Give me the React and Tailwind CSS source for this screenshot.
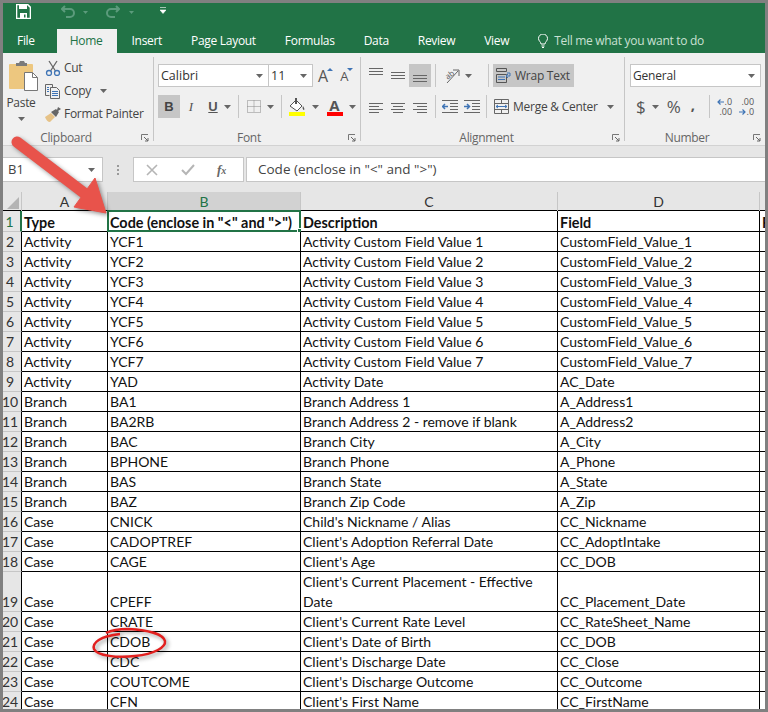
// Excel sheet screenshot: ribbon, formula bar and the field list
import React from "react";

const rows = [
  ["Type", "Code (enclose in \"<\" and \">\")", "Description", "Field"],
  ["Activity", "YCF1", "Activity Custom Field Value 1", "CustomField_Value_1"],
  ["Activity", "YCF2", "Activity Custom Field Value 2", "CustomField_Value_2"],
  ["Activity", "YCF3", "Activity Custom Field Value 3", "CustomField_Value_3"],
  ["Activity", "YCF4", "Activity Custom Field Value 4", "CustomField_Value_4"],
  ["Activity", "YCF5", "Activity Custom Field Value 5", "CustomField_Value_5"],
  ["Activity", "YCF6", "Activity Custom Field Value 6", "CustomField_Value_6"],
  ["Activity", "YCF7", "Activity Custom Field Value 7", "CustomField_Value_7"],
  ["Activity", "YAD", "Activity Date", "AC_Date"],
  ["Branch", "BA1", "Branch Address 1", "A_Address1"],
  ["Branch", "BA2RB", "Branch Address 2 - remove if blank", "A_Address2"],
  ["Branch", "BAC", "Branch City", "A_City"],
  ["Branch", "BPHONE", "Branch Phone", "A_Phone"],
  ["Branch", "BAS", "Branch State", "A_State"],
  ["Branch", "BAZ", "Branch Zip Code", "A_Zip"],
  ["Case", "CNICK", "Child's Nickname / Alias", "CC_Nickname"],
  ["Case", "CADOPTREF", "Client's Adoption Referral Date", "CC_AdoptIntake"],
  ["Case", "CAGE", "Client's Age", "CC_DOB"],
  ["Case", "CPEFF", "Client's Current Placement - Effective Date", "CC_Placement_Date"],
  ["Case", "CRATE", "Client's Current Rate Level", "CC_RateSheet_Name"],
  ["Case", "CDOB", "Client's Date of Birth", "CC_DOB"],
  ["Case", "CDC", "Client's Discharge Date", "CC_Close"],
  ["Case", "COUTCOME", "Client's Discharge Outcome", "CC_Outcome"],
  ["Case", "CFN", "Client's First Name", "CC_FirstName"],
];

const Caret = ({ className = "" }) => (
  <svg width="7" height="4" viewBox="0 0 7 4" className={`shrink-0 ${className}`}>
    <path d="M0 0h7L3.5 4z" fill="#666" />
  </svg>
);

const Lines = ({ ys, className = "" }) => (
  <svg width="14" height="14" viewBox="0 0 14 14" className={`shrink-0 ${className}`}>
    {ys.map(([x1, x2, y]) => (
      <path key={y} d={`M${x1} ${y + 0.5}H${x2}`} stroke="#666" />
    ))}
  </svg>
);

const Launcher = () => (
  <svg width="8" height="8" viewBox="0 0 8 8" className="shrink-0">
    <path d="M.5 6V.5H7" fill="none" stroke="#777" />
    <path d="M3 3l4 4M4 7h3V4" fill="none" stroke="#666" />
  </svg>
);

const Sep = ({ className = "" }) => <div className={`w-px h-[23px] bg-[#c6c6c6] shrink-0 ${className}`} />;

function Group({ width, label, labelShift = "", children }) {
  return (
    <div className={`flex flex-col shrink-0 ${width}`}>
      <div className="h-[76px] pt-[11px]">{children}</div>
      <div className="flex items-center h-[16px] pt-[2px] pr-[4px] text-[#666] text-[12px] tracking-[-0.3px]">
        <span className={`flex-1 text-center ${labelShift}`}>{label}</span>
        <Launcher />
      </div>
    </div>
  );
}

function TitleBar() {
  return (
    <div className="h-[26px] bg-[#217346] flex items-start pl-[13px]">
      <svg width="15" height="15" viewBox="0 0 15 15" className="mt-px">
        <path d="M.5.5h11l3 3v11H.5z" fill="none" stroke="#fff" strokeWidth="1.6" />
        <path d="M3 1h8v4H3zM4 9h7v5H4z" fill="#fff" />
        <path d="M8 10.5h1.5v3H8z" fill="#217346" />
      </svg>
      <svg width="14" height="13" viewBox="0 0 14 13" className="ml-[30px] mt-[2px]">
        <path d="M1 4h8a4 4 0 0 1 0 8H5M4 1L1 4l3 3" fill="none" stroke="#5c9b7c" strokeWidth="2" />
      </svg>
      <svg width="5" height="3" viewBox="0 0 5 3" className="ml-[8px] mt-[8px]"><path d="M0 0h5L2.5 3z" fill="#5c9b7c" /></svg>
      <svg width="14" height="13" viewBox="0 0 14 13" className="ml-[18px] mt-[2px]">
        <path d="M13 4H5a4 4 0 0 0 0 8h4M10 1l3 3-3 3" fill="none" stroke="#5c9b7c" strokeWidth="2" />
      </svg>
      <svg width="5" height="3" viewBox="0 0 5 3" className="ml-[9px] mt-[8px]"><path d="M0 0h5L2.5 3z" fill="#5c9b7c" /></svg>
      <svg width="6" height="7" viewBox="0 0 6 7" className="ml-[26px] mt-[4px]">
        <path d="M0 .5h6M0 3h6L3 6.5z" fill="#fff" stroke="#fff" strokeWidth=".6" />
      </svg>
    </div>
  );
}

function Tabs() {
  return (
    <div className="h-[24px] bg-[#217346] flex items-center pl-[14px] gap-[29px] text-white text-[12px] tracking-[-0.3px]">
      <span className="mr-[6px]">File</span>
      <span className="-ml-[13px] -mr-[14px] pl-[13px] pr-[14px] h-full flex items-center bg-[#f0f0f0] text-[#217346]">Home</span>
      <span>Insert</span>
      <span>Page Layout</span>
      <span>Formulas</span>
      <span>Data</span>
      <span>Review</span>
      <span>View</span>
      <span className="flex items-center gap-[6px] text-[#c9e0d3]">
        <svg width="10" height="14" viewBox="0 0 10 14" fill="none" stroke="#fff">
          <path d="M3 10c0-2-2.500-3-2.500-5.500a4.500 4.500 0 0 1 9 0C9.500 7 7 8 7 10zM3.500 12h3M4 13.500h2" />
        </svg>
        Tell me what you want to do
      </span>
    </div>
  );
}

function ClipboardGroup() {
  return (
    <Group width="w-[150px]" label="Clipboard" labelShift="mr-[12px]">
      <div className="flex tracking-[-0.3px]">
        <div className="w-[36px] -mt-[3px] flex flex-col items-center shrink-0">
          <svg width="30" height="30" viewBox="0 0 30 30" className="ml-[5px]">
            <rect x="0" y="3" width="24" height="25" rx="1" fill="#edc77f" />
            <path d="M7 5V2h3l1-2h4l1 2h2v3z" fill="#7b7b7b" />
            <path d="M15.500 11.500h8l5 5v13h-13z" fill="#fff" stroke="#777" />
            <path d="M23.500 11.500v5h5" fill="none" stroke="#777" />
          </svg>
          <span className="text-[12px] text-[#444] mt-[3px] leading-[18px]">Paste</span>
          <Caret className="mt-[5px]" />
        </div>
        <div className="ml-[6px] -mt-[8px] flex flex-col text-[12px] text-[#444] whitespace-nowrap">
          <div className="flex items-center h-[23px] gap-[3px]">
            <svg width="16" height="16" viewBox="0 0 16 16" fill="none">
              <path d="M4 1l6.500 10M12 1L5.500 11" stroke="#666" strokeWidth="1.300" />
              <circle cx="4" cy="13" r="2.500" stroke="#3f74b5" strokeWidth="1.300" />
              <circle cx="12" cy="13" r="2.500" stroke="#3f74b5" strokeWidth="1.300" />
            </svg>
            Cut
          </div>
          <div className="flex items-center h-[23px] gap-[3px]">
            <svg width="16" height="16" viewBox="0 0 16 16" fill="none" stroke="#666">
              <path d="M.5 1.500h7v3M.5 1.500v11h4" />
              <path d="M5.500 4.500h6l3 3v8h-9z" fill="#f0f0f0" />
              <path d="M7 8.500h6M7 10.500h6M7 12.500h6M2 4.500h2M2 6.500h2M2 8.500h2" stroke="#3f74b5" />
            </svg>
            Copy
            <Caret className="ml-[6px]" />
          </div>
          <div className="flex items-center h-[23px] gap-[3px]">
            <svg width="16" height="16" viewBox="0 0 16 16">
              <path d="M0 11l6-4 4 4-5 5c-2 0-4-2-5-5z" fill="#e6c287" />
              <path d="M6 6l5-3 1 1 1-3 3 2-3 2 1 1-3 5z" fill="#666" />
            </svg>
            Format Painter
          </div>
        </div>
      </div>
    </Group>
  );
}

function FontGroup() {
  return (
    <Group width="w-[206px]" label="Font" labelShift="mr-[4px]">
      <div className="pl-[4px] text-[#444]">
        <div className="flex items-center h-[23px]">
          <div className="w-[111px] h-[23px] bg-white border border-[#c6c6c6] flex items-center justify-between pl-[2px] pr-[5px] pt-px text-[12.500px] text-[#333]">
            Calibri <Caret />
          </div>
          <div className="w-[44px] h-[23px] bg-white border border-l-0 border-[#c6c6c6] flex items-center justify-between pl-[2px] pr-[5px] pt-px text-[12.500px] text-[#333]">
            11 <Caret />
          </div>
          <div className="relative ml-[5px] text-[16px] leading-none text-[#555]">
            A
            <svg width="6" height="3" viewBox="0 0 6 3" className="absolute -right-[5px] top-0"><path d="M0 3l3-3 3 3z" fill="#3f74b5" /></svg>
          </div>
          <div className="relative ml-[12px] text-[13px] leading-none text-[#555] mt-[2px]">
            A
            <svg width="6" height="3" viewBox="0 0 6 3" className="absolute -right-[5px] -top-[2px]"><path d="M0 0h6L3 3z" fill="#3f74b5" /></svg>
          </div>
        </div>
        <div className="flex items-center h-[23px] mt-[8px]">
          <div className="w-[22px] h-[23px] bg-[#c6c6c6] flex items-center justify-center font-bold text-[13px] text-[#444] font-['Liberation_Sans',sans-serif]">B</div>
          <div className="w-[22px] text-center italic text-[13px] font-['Liberation_Serif',serif] text-[#555]">I</div>
          <div className="w-[22px] text-center underline text-[13px] font-['Liberation_Sans',sans-serif] font-bold text-[#555]">U</div>
          <Caret />
          <Sep className="ml-[7px]" />
          <svg width="14" height="13" viewBox="0 0 14 13" className="ml-[8px] shrink-0">
            <path d="M.5.5h13v12H.5zM.5 6.500h13M7 .5v12" fill="none" stroke="#888" strokeDasharray="1 1" />
          </svg>
          <Caret className="ml-[6px]" />
          <Sep className="ml-[7px]" />
          <svg width="17" height="18" viewBox="0 0 17 18" className="ml-[7px] shrink-0">
            <path d="M1 8l6-6 6 6-5 5z" fill="#fff" stroke="#555" />
            <path d="M6 0h2v6H6zM14 8c1 2 2 3 1 4-1 0-2-2-1-4z" fill="#555" />
            <path d="M0 14h16v4H0z" fill="#ffff00" />
          </svg>
          <Caret className="ml-[6px]" />
          <div className="w-[17px] ml-[7px] flex flex-col items-center shrink-0">
            <span className="text-[15px] leading-[14px] font-bold text-[#555]">A</span>
            <div className="w-[16px] h-[4px] bg-[#ff0000]" />
          </div>
          <Caret className="ml-[6px]" />
        </div>
      </div>
    </Group>
  );
}

function AlignmentGroup() {
  return (
    <Group width="w-[263px]" label="Alignment">
      <div className="pl-[8px] text-[12px] tracking-[-0.25px] text-[#444] whitespace-nowrap">
        <div className="flex items-center h-[23px]">
          <Lines className="-mt-[1px]" ys={[[0, 14, 0], [0, 14, 3], [0, 14, 6]]} />
          <Lines className="ml-[8px] -mt-[1px]" ys={[[0, 14, 4], [0, 14, 7], [0, 14, 10]]} />
          <div className="ml-[4px] w-[22px] h-[23px] bg-[#c6c6c6] flex items-center justify-center">
            <Lines className="-mt-[1px]" ys={[[0, 14, 7], [0, 14, 10], [0, 14, 13]]} />
          </div>
          <Sep className="ml-[4px]" />
          <svg width="17" height="17" viewBox="0 0 17 17" fill="none" className="ml-[7px] shrink-0 overflow-visible">
            <text x="2" y="11" fontSize="8" fill="#555" transform="rotate(-35 6 8)">ab</text>
            <path d="M4 16L15 4" stroke="#666" />
            <path d="M10 3h6v6" stroke="#666" />
          </svg>
          <Caret className="ml-[5px]" />
          <Sep className="ml-[16px]" />
          <div className="ml-[4px] h-[23px] w-[81px] bg-[#c6c6c6] flex items-center pl-[3px] gap-[4px]">
            <svg width="15" height="15" viewBox="0 0 15 15" fill="none" className="shrink-0">
              <path d="M.5.5h10v3H.5zM.5 6.500h10v8H.5z" stroke="#555" />
              <path d="M2 9h7M2 11.500h7M11 5h3v3h-3M12 6l-2 2 2 2" stroke="#3f74b5" />
            </svg>
            Wrap Text
          </div>
        </div>
        <div className="flex items-center h-[23px] mt-[8px]">
          <Lines ys={[[0, 14, 3], [0, 10, 6], [0, 14, 9], [0, 10, 12]]} />
          <Lines className="ml-[8px]" ys={[[0, 14, 3], [2, 12, 6], [0, 14, 9], [2, 12, 12]]} />
          <Lines className="ml-[8px]" ys={[[0, 14, 3], [4, 14, 6], [0, 14, 9], [4, 14, 12]]} />
          <Sep className="ml-[8px]" />
          <svg width="16" height="13" viewBox="0 0 16 13" fill="none" className="ml-[6px] shrink-0">
            <path d="M0 .5h16M8 3.500h8M8 6.500h8M8 9.500h8M0 12.500h16" stroke="#666" />
            <path d="M6 6.500H1M3 4L.5 6.500 3 9" stroke="#3f74b5" strokeWidth="1.500" />
          </svg>
          <svg width="16" height="13" viewBox="0 0 16 13" fill="none" className="ml-[6px] shrink-0">
            <path d="M0 .5h16M8 3.500h8M8 6.500h8M8 9.500h8M0 12.500h16" stroke="#666" />
            <path d="M0 6.500h5M3 4l2.500 2.500L3 9" stroke="#3f74b5" strokeWidth="1.500" />
          </svg>
          <Sep className="ml-[6px]" />
          <svg width="15" height="15" viewBox="0 0 15 15" fill="none" className="ml-[7px] shrink-0">
            <path d="M.5.500h14v14H.5zM.5 4.500h14M.5 10.500h14M7.500.5v4M7.500 10.500v4" stroke="#666" />
            <path d="M2 7.500h11M4 6L2 7.500 4 9M11 6l2 1.500L11 9" stroke="#3f74b5" />
          </svg>
          <span className="ml-[4px]">Merge &amp; Center</span>
          <Caret className="ml-[9px]" />
        </div>
      </div>
    </Group>
  );
}

function NumberGroup() {
  return (
    <Group width="flex-1" label="Number" labelShift="mr-[4px]">
      <div className="pl-[5px] text-[#444]">
        <div className="w-[131px] h-[23px] bg-white border border-[#c6c6c6] flex items-center justify-between pl-[2px] pr-[5px] pt-px text-[12px] tracking-[-0.2px] text-[#333]">
          General <Caret />
        </div>
        <div className="flex items-center h-[23px] mt-[8px]">
          <span className="ml-[6px] text-[17px] leading-none text-[#555]">$</span>
          <Caret className="ml-[6px]" />
          <span className="ml-[8px] text-[17px] leading-none text-[#555]">%</span>
          <span className="ml-[10px] text-[15px] leading-none font-bold text-[#555] -mt-[5px]">,</span>
          <Sep className="ml-[14px]" />
          <div className="ml-[6px] w-[16px] flex flex-col items-end text-[9px] leading-[10px] text-[#555]">
            <div className="flex items-center gap-[1px]">
              <svg width="7" height="6" viewBox="0 0 7 6" fill="none" stroke="#3f74b5" strokeWidth="1.200"><path d="M7 3H1M3.500.5L1 3l2.500 2.500" /></svg>
              <span>.0</span>
            </div>
            <span>.00</span>
          </div>
          <div className="ml-[6px] w-[16px] flex flex-col items-end text-[9px] leading-[10px] text-[#555]">
            <span>.00</span>
            <div className="flex items-center gap-[1px]">
              <svg width="7" height="6" viewBox="0 0 7 6" fill="none" stroke="#3f74b5" strokeWidth="1.200"><path d="M0 3h6M3.500.5L6 3 3.500 5.500" /></svg>
              <span>.0</span>
            </div>
          </div>
        </div>
      </div>
    </Group>
  );
}

function Ribbon() {
  return (
    <div className="h-[93px] bg-[#f0f0f0] border-b border-[#d2d2d2] flex">
      <ClipboardGroup />
      <div className="w-px h-[84px] mt-[4px] bg-[#c6c6c6] shrink-0" />
      <FontGroup />
      <div className="w-px h-[84px] mt-[4px] bg-[#c6c6c6] shrink-0" />
      <AlignmentGroup />
      <div className="w-px h-[84px] mt-[4px] bg-[#c6c6c6] shrink-0" />
      <NumberGroup />
    </div>
  );
}

function FormulaBar() {
  return (
    <div className="h-[46px] bg-[#e6e6e6] pt-[11px]">
      <div className="flex h-[25px] bg-[#e6e6e6]">
        <div className="w-[100px] bg-white border-y border-r border-[#c6c6c6] flex items-center justify-between pl-[5px] pr-[7px] text-[13px] text-[#444]">
          B1 <Caret />
        </div>
        <div className="w-[30px] flex flex-col items-center justify-center gap-[2px]">
          <i className="w-[2px] h-[2px] bg-[#999]" />
          <i className="w-[2px] h-[2px] bg-[#999]" />
          <i className="w-[2px] h-[2px] bg-[#999]" />
        </div>
        <div className="w-[111px] bg-white border border-[#c6c6c6] flex items-center pl-[12px]">
          <svg width="12" height="12" viewBox="0 0 12 12" fill="none" stroke="#b5b5b5" strokeWidth="1.600"><path d="M1 1l10 10M11 1L1 11" /></svg>
          <svg width="14" height="12" viewBox="0 0 14 12" fill="none" stroke="#b5b5b5" strokeWidth="2" className="ml-[23px]"><path d="M1 6l4 4 8-9" /></svg>
          <span className="ml-[22px] italic font-bold text-[13px] text-[#666] font-['Liberation_Serif',serif]">f<span className="text-[10px]">x</span></span>
        </div>
        <div className="flex-1 ml-[2px] bg-white border-y border-l border-[#c6c6c6] flex items-center pl-[11px] text-[13.500px] text-[#444]">
          Code (enclose in "&lt;" and "&gt;")
        </div>
      </div>
    </div>
  );
}

const colLetters = ["A", "B", "C", "D"];
const colWidths = ["w-[86px]", "w-[193px]", "w-[257px]", "w-[202px]"];

function Sheet() {
  return (
    <div className="font-['Lato',sans-serif] text-[14px] text-[#111]">
      <div className="h-[19px] flex bg-[#e6e6e6] text-[#333]">
        <div className="w-[19px] shrink-0 relative border-r border-[#c6c6c6]">
          <svg width="12" height="12" viewBox="0 0 12 12" className="absolute right-[2px] bottom-[2px]"><path d="M12 0v12H0z" fill="#b4b4b4" /></svg>
        </div>
        {colLetters.map((letter, i) => (
          <div
            key={letter}
            className={`${colWidths[i]} shrink-0 text-center leading-[19px] border-r border-[#c6c6c6] ${letter === "B" ? "bg-[#d2d2d2] text-[#217346]" : ""}`}
          >
            {letter}
          </div>
        ))}
        <div className="flex-1" />
      </div>
      {rows.map((row, r) => {
        const tall = r === 18;
        const height = r === 0 ? "h-[22px] -mt-px border-t border-black font-bold text-[14.400px]" : tall ? "h-[40px]" : "h-[20px]";
        const lead = r === 0 ? "leading-[17px]" : "leading-[19px]";
        return (
          <div key={r} className={`flex bg-white ${height}`}>
            <div className={`w-[19px] shrink-0 flex items-end justify-center pr-[4px] bg-[#e6e6e6] border-b border-b-[#c6c6c6] font-normal text-[14px] leading-[19px] ${r === 0 ? "border-r-2 border-r-[#217346] text-[#217346]" : "border-r border-r-black text-[#333]"}`}>
              {r + 1}
            </div>
            {row.map((cell, c) => (
              <div
                key={c}
                className={`${colWidths[c]} shrink-0 relative flex items-end pl-[2px] border-r border-b border-black ${lead} ${tall && c === 2 ? "whitespace-normal" : "whitespace-nowrap"}`}
              >
                <span className={tall && c === 2 ? "leading-[20px] -mb-px" : ""}>{cell}</span>
                {r === 0 && c === 1 && (
                  <div className="absolute -left-px -top-px -right-px -bottom-px border-2 border-[#217346]">
                    <div className="absolute -right-[3px] -bottom-[3px] w-[5px] h-[5px] bg-[#217346] border border-white" />
                  </div>
                )}
              </div>
            ))}
            <div className={`flex-1 overflow-hidden pl-[2px] ${lead} border-b border-black flex items-end`}>
              {r === 0 ? "F" : ""}
            </div>
          </div>
        );
      })}
    </div>
  );
}

export default function App() {
  return (
    <div className="relative w-[768px] h-[712px] bg-[#808080] p-[3px] overflow-hidden font-['Open_Sans',sans-serif]">
      <div className="h-[706px] overflow-hidden bg-white">
        <TitleBar />
        <Tabs />
        <Ribbon />
        <FormulaBar />
        <Sheet />
      </div>
      {/* callouts drawn on top of the screenshot */}
      <svg width="768" height="712" viewBox="0 0 768 712" className="absolute left-0 top-0 pointer-events-none drop-shadow-[2px_2px_2px_rgba(0,0,0,0.4)]">
        <path d="M17 142L88 196" stroke="#e8534b" strokeWidth="11" strokeLinecap="round" />
        <path d="M74 207L95 178L106 213z" fill="#e8534b" stroke="#e8534b" strokeLinejoin="round" />
        <path
          d="M120 634C100 636 92 643 94 649C97 656 118 658 135 656C155 654 166 647 165 641C163 634 148 630 128 629C118 629 110 631 106 633"
          fill="none"
          stroke="#e2201f"
          strokeWidth="2.500"
        />
      </svg>
    </div>
  );
}
